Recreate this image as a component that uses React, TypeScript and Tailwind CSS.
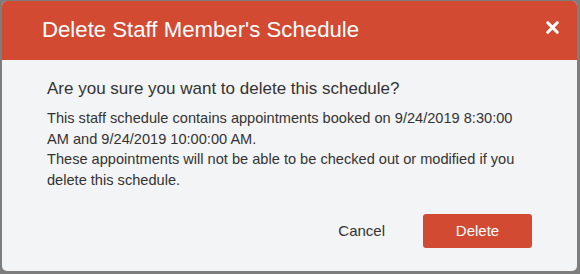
import { X } from 'lucide-react'

export default function App() {
  return (
    <div className="h-[274px] w-[580px] overflow-hidden bg-[#7d7d7d] px-[2px] pt-[1px] font-['Liberation_Sans',Arial,sans-serif]">
      <div className="flex h-[270px] w-[575px] flex-col overflow-hidden rounded-[5px] bg-[#f3f4f6]">
        <div className="flex h-[59px] shrink-0 items-center justify-between bg-[#d34a32] pl-[40px] pr-[15px]">
          <h2 className="text-[22.2px] leading-none text-white">Delete Staff Member's Schedule</h2>
          <button type="button" className="-mt-[6px] text-white" aria-label="Close">
            <X size={19} strokeWidth={4} />
          </button>
        </div>
        <div className="flex-1 pl-[45px] pr-[46px] pt-[19px]">
          <p className="text-[17px] leading-[20px] text-[#333]">Are you sure you want to delete this schedule?</p>
          <p className="mt-[9px] text-[14.6px] leading-[20.5px] text-[#333]">
            This staff schedule contains appointments booked on 9/24/2019 8:30:00 AM and 9/24/2019 10:00:00 AM.
            <br />
            These appointments will not be able to be checked out or modified if you delete this schedule.
          </p>
        </div>
        <div className="flex items-center justify-end gap-[38px] pb-[23px] pr-[45px]">
          <button type="button" className="text-[15px] text-[#333]">Cancel</button>
          <button type="button" className="h-[34px] w-[109px] rounded-[3px] bg-[#d34a32] text-[15px] text-white">
            Delete
          </button>
        </div>
      </div>
    </div>
  )
}
